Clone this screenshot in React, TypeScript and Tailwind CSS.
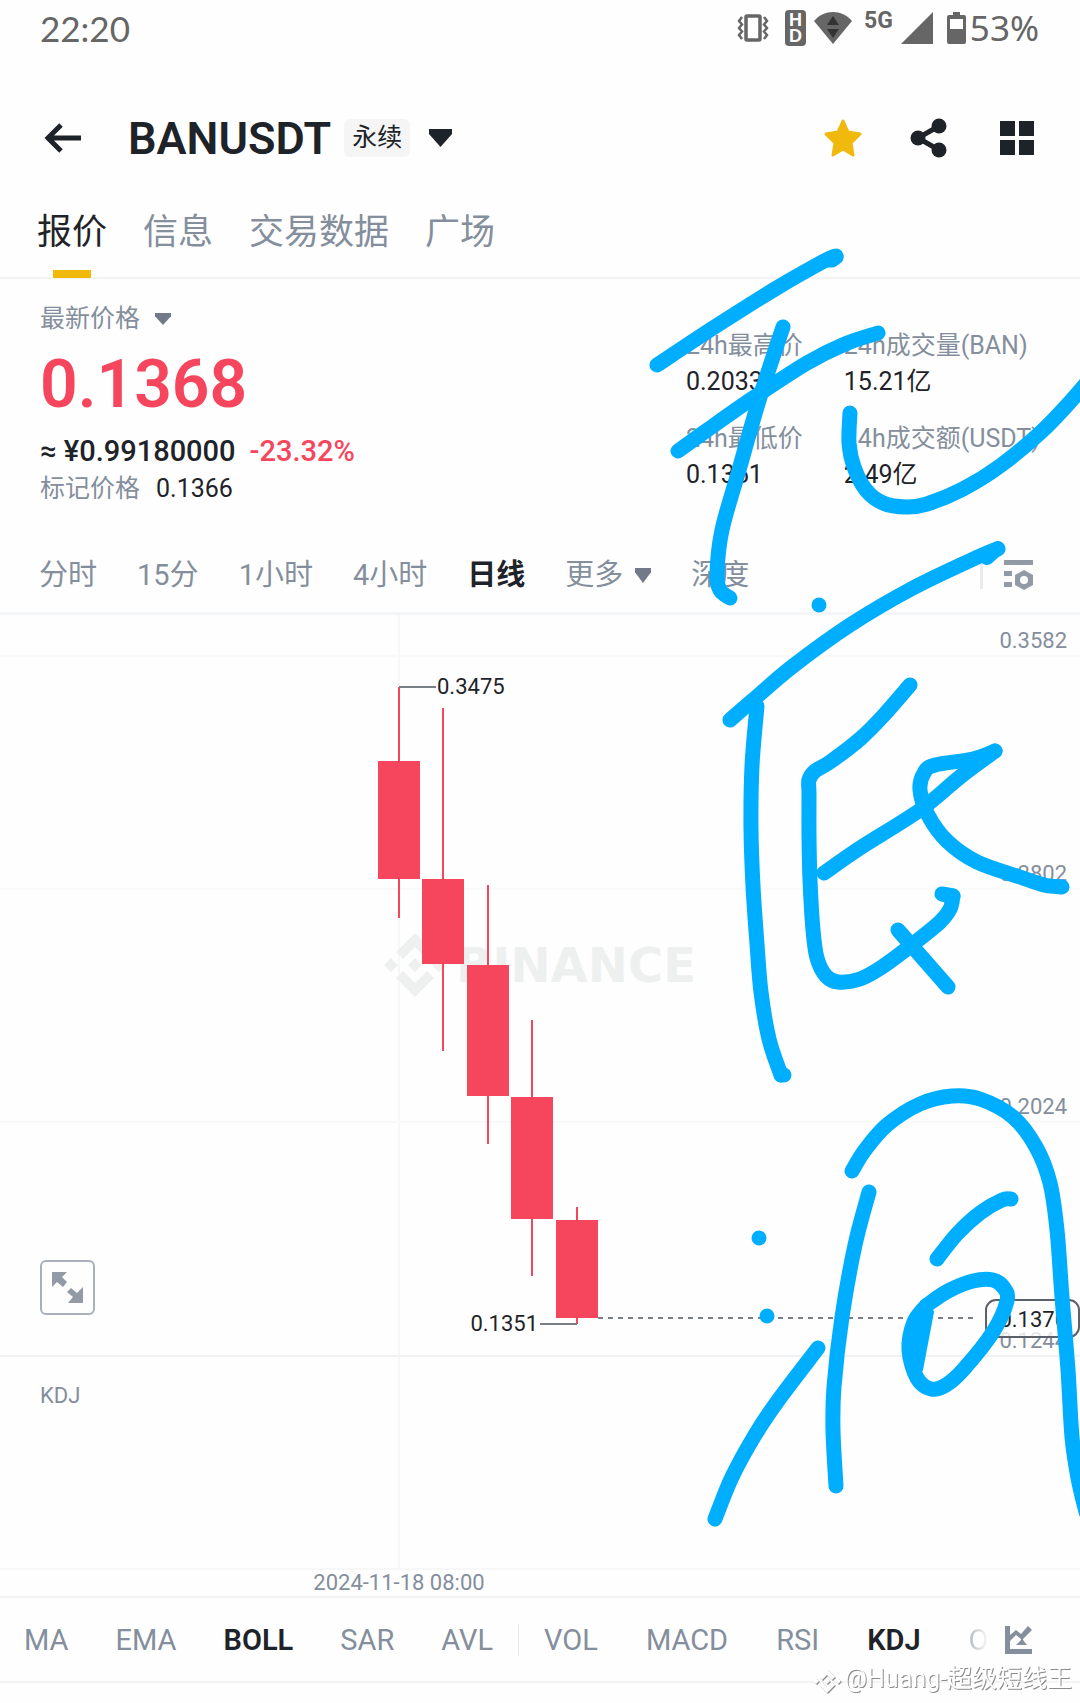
import { useState } from "react";

type Point = [number, number];

const pageTabs = ["报价", "信息", "交易数据", "广场"];
const intervals = ["分时", "15分", "1小时", "4小时", "日线"];
const mainIndicators = ["MA", "EMA", "BOLL", "SAR", "AVL"];
const subIndicators = ["VOL", "MACD", "RSI", "KDJ"];

const stats = [
    { label: "24h最高价", value: "0.2033" },
    { label: "24h成交量(BAN)", value: "15.21亿" },
    { label: "24h最低价", value: "0.1351" },
    { label: "24h成交额(USDT)", value: "2.49亿" },
];

const candles = [
    { x: 399, high: 687, open: 761, close: 879, low: 918 },
    { x: 443, high: 708, open: 879, close: 964, low: 1051 },
    { x: 488, high: 885, open: 965, close: 1096, low: 1144 },
    { x: 532, high: 1020, open: 1097, close: 1219, low: 1276 },
    { x: 577, high: 1207, open: 1220, close: 1318, low: 1324 },
];

const gridLines = [
    { y: 656, label: "0.3582" },
    { y: 889, label: "0.2802" },
    { y: 1122, label: "0.2024" },
    { y: 1356, label: "0.1244" },
];

// Pen annotations, one list of points per stroke
const strokes: Point[][] = [
    [[657, 365], [713, 328], [775, 289], [826, 260], [836, 256]],
    [[678, 451], [713, 426], [753, 398], [807, 363], [845, 344], [878, 333]],
    [[783, 327], [760, 397], [739, 470], [722, 530], [717, 573], [720, 590], [730, 598]],
    [[850, 413], [849, 443], [854, 467], [866, 490], [883, 503], [906, 507], [927, 504], [963, 489], [1000, 466], [1040, 433], [1070, 402], [1094, 374]],
    [[730, 720], [753, 700], [793, 666], [850, 625], [913, 588], [980, 556], [998, 549]],
    [[757, 706], [752, 766], [751, 828], [753, 886], [757, 944], [761, 992], [769, 1039], [781, 1075]],
    [[781, 1075], [784, 1075]],
    [[910, 685], [884, 715], [860, 739], [830, 762], [815, 771], [809, 780], [809, 794], [809, 835], [810, 880], [813, 930], [817, 958], [826, 976], [838, 982], [860, 979], [882, 967], [913, 944], [940, 922], [950, 909], [953, 896]],
    [[953, 896], [942, 894]],
    [[898, 930], [948, 987]],
    [[824, 873], [860, 848], [920, 810], [960, 777], [995, 751]],
    [[995, 751], [973, 759], [935, 765], [924, 773], [920, 790], [928, 815], [947, 841], [977, 862], [1020, 877], [1044, 885], [1062, 887]],
    [[852, 1171], [865, 1150], [887, 1125], [920, 1104], [952, 1096], [980, 1099], [1013, 1117], [1036, 1147], [1050, 1183], [1057, 1230], [1062, 1297], [1068, 1370], [1072, 1437], [1078, 1478], [1086, 1512]],
    [[869, 1192], [855, 1245], [842, 1317], [834, 1387], [833, 1430], [836, 1486]],
    [[818, 1348], [777, 1402], [755, 1435], [732, 1477], [715, 1519]],
    [[937, 1259], [957, 1234], [980, 1213], [1002, 1200], [1011, 1199]],
    [[927, 1305], [948, 1291], [973, 1281], [993, 1280], [1004, 1288], [1007, 1301], [993, 1332], [963, 1370], [946, 1385], [931, 1389], [917, 1378], [909, 1350], [914, 1322], [927, 1305]],
];

const dots: Point[] = [[819, 605], [759, 1238], [767, 1316]];

function smoothPath(points: Point[]) {
    let d = `M${points[0][0]} ${points[0][1]}`;
    for (let i = 0; i < points.length - 1; i++) {
        const p0 = points[i - 1] ?? points[i];
        const p1 = points[i];
        const p2 = points[i + 1];
        const p3 = points[i + 2] ?? p2;
        d += ` C${p1[0] + (p2[0] - p0[0]) / 6} ${p1[1] + (p2[1] - p0[1]) / 6}`;
        d += ` ${p2[0] - (p3[0] - p1[0]) / 6} ${p2[1] - (p3[1] - p1[1]) / 6}`;
        d += ` ${p2[0]} ${p2[1]}`;
    }
    return d;
}

function Caret({ className }: { className: string }) {
    return (
        <svg viewBox="0 0 22 18" className={className} fill="currentColor" preserveAspectRatio="none" aria-hidden="true">
            <path d="M0 0H22V5L11 18L0 5Z" />
        </svg>
    );
}

function StatusBar() {
    return (
        <div className="flex h-14 items-center justify-between pl-10 pr-[41px] text-[#666]">
            <span className="font-['Lato',sans-serif] text-[35px] leading-[56px]">22:20</span>
            <div className="flex items-center">
                <svg width="32" height="28" viewBox="0 0 32 28" fill="none" stroke="currentColor" aria-hidden="true">
                    <rect x="9" y="2" width="14" height="24" rx="1" strokeWidth="3.5" />
                    <path d="M5 3L2 7L5 10.500L2 14L5 17.500L2 21L5 25M27 3L30 7L27 10.500L30 14L27 17.500L30 21L27 25" strokeWidth="2.500" />
                </svg>
                <span className="ml-4 flex h-9 w-[21px] flex-col items-center justify-center rounded bg-[#666] font-['Liberation_Sans',sans-serif] text-[18px] font-bold leading-4 text-[#fefefe]">
                    <span>H</span>
                    <span>D</span>
                </span>
                <svg width="38" height="32" viewBox="0 0 38 32" className="ml-2" aria-hidden="true">
                    <path d="M0 9C10-3 28-3 38 9L19 32Z" fill="currentColor" />
                    <path d="M19 4L25 13H13ZM19 26L13 17H25Z" fill="#333" />
                </svg>
                <span className="ml-3 self-start pt-2 font-['Roboto',sans-serif] text-[23px] font-bold leading-[26px]">5G</span>
                <svg width="32" height="32" viewBox="0 0 32 32" className="ml-2" fill="currentColor" aria-hidden="true">
                    <path d="M32 0V32H0Z" />
                </svg>
                <svg width="19" height="32" viewBox="0 0 19 32" className="ml-[14px]" aria-hidden="true">
                    <path d="M6 0H13V3H17Q19 3 19 5V30Q19 32 17 32H2Q0 32 0 30V5Q0 3 2 3H6Z" fill="currentColor" />
                    <rect x="3" y="7" width="13" height="10" fill="#fefefe" />
                </svg>
                <span className="ml-1 font-['Noto_Sans',sans-serif] text-[35px] leading-[56px]">53%</span>
            </div>
        </div>
    );
}

function Header() {
    return (
        <header className="mt-[42px] flex h-20 items-center justify-between pl-11 pr-[46px]">
            <div className="flex items-center">
                <button type="button" aria-label="返回">
                    <svg width="37" height="30" viewBox="0 0 37 30" fill="none" stroke="currentColor" strokeWidth="5" aria-hidden="true">
                        <path d="M37 15H5M17 2L4 15L17 28" />
                    </svg>
                </button>
                <h1 className="ml-[47px] pt-[2px] text-[45px] font-semibold leading-[56px]">BANUSDT</h1>
                <span className="ml-[13px] rounded-md bg-[#f5f5f5] px-2 text-[25px] leading-[38px]">永续</span>
                <button type="button" aria-label="切换交易对" className="ml-[19px]">
                    <Caret className="h-[18px] w-[23px]" />
                </button>
            </div>
            <div className="flex items-center">
                <button type="button" aria-label="收藏">
                    <svg width="38" height="40" viewBox="0 0 38 40" aria-hidden="true">
                        <path d="M19 3L24 14L36 16L27 25L29 37L19 31L9 37L11 25L2 16L14 14Z" fill="#f0b90b" stroke="#f0b90b" strokeWidth="3" strokeLinejoin="round" />
                    </svg>
                </button>
                <button type="button" aria-label="分享" className="ml-12">
                    <svg width="37" height="40" viewBox="0 0 37 40" aria-hidden="true">
                        <path d="M29 8L8 20L29 32" fill="none" stroke="currentColor" strokeWidth="5" />
                        <circle cx="29" cy="8" r="7.500" fill="currentColor" />
                        <circle cx="8" cy="20" r="7.500" fill="currentColor" />
                        <circle cx="29" cy="32" r="7.500" fill="currentColor" />
                    </svg>
                </button>
                <button type="button" aria-label="更多功能" className="ml-[53px]">
                    <svg width="34" height="34" viewBox="0 0 34 34" fill="currentColor" aria-hidden="true">
                        <path d="M0 0H15V15H0ZM19 0H34V15H19ZM0 19H15V34H0ZM19 19H34V34H19Z" />
                    </svg>
                </button>
            </div>
        </header>
    );
}

function PriceChart() {
    return (
        <div className="relative">
            <svg viewBox="0 615 1080 981" className="block h-auto w-full" role="img" aria-label="BANUSDT 日线">
                <path d="M399 615V1569" stroke="#f7f7f8" strokeWidth="2" />
                {gridLines.map((line, i) => (
                    <path key={line.y} d={`M0 ${line.y}H1080`} stroke={i === 3 ? "#f1f2f3" : "#f9f9fa"} strokeWidth="2" />
                ))}
                <path d="M0 1569H1080" stroke="#f7f7f8" strokeWidth="2" />

                <g fill="#eef0f0">
                    <path d="M415 933L434 952L427 959L415 947L403 959L396 952ZM415 997L396 978L403 971L415 983L427 971L434 978ZM391 958L398 965L391 972L384 965ZM415 958L422 965L415 972L408 965ZM439 958L446 965L439 972L432 965Z" />
                    <text x="456" y="982" className="font-['DejaVu_Sans',sans-serif] text-[48px] font-bold">BINANCE</text>
                </g>

                {candles.map((candle) => (
                    <g key={candle.x} fill="#f6465d">
                        <rect x={candle.x - 1} y={candle.high} width="2" height={candle.low - candle.high} />
                        <rect x={candle.x - 21} y={candle.open} width="42" height={candle.close - candle.open} />
                    </g>
                ))}

                <g stroke="#7a7e86" strokeWidth="2">
                    <path d="M399 687H436M540 1324H577" />
                    <path d="M598 1318H974" strokeDasharray="5 5" />
                </g>

                <g fill="#1e2329" className="text-[22px]">
                    <text x="437" y="694">0.3475</text>
                    <text x="538" y="1331" textAnchor="end">0.1351</text>
                </g>
                <g fill="#848e9c" className="text-[22px]">
                    {gridLines.map((line) => (
                        <text key={line.y} x="1067" y={line.y - 8} textAnchor="end">{line.label}</text>
                    ))}
                    <text x="40" y="1403">KDJ</text>
                    <text x="399" y="1590" textAnchor="middle">2024-11-18 08:00</text>
                </g>
                <rect x="986" y="1300" width="93" height="37" rx="10" fill="#fefefe" fillOpacity="0.8" stroke="#5c6068" strokeWidth="2" />
                <text x="1067" y="1327" textAnchor="end" fill="#1e2329" className="text-[22px]">0.1370</text>
            </svg>
            <button
                type="button"
                aria-label="全屏"
                className="absolute left-10 top-[645px] flex h-[55px] w-[55px] items-center justify-center rounded-md border-2 border-[#a9b0ba] text-[#929aa5]"
            >
                <svg width="31" height="31" viewBox="0 0 31 31" fill="currentColor" aria-hidden="true">
                    <path d="M0 0H15L10 5L15 10L11 15L5 10L0 15ZM31 31H16L21 25L15 20L19 16L25 21L31 15Z" />
                </svg>
            </button>
        </div>
    );
}

function Annotations() {
    return (
        <svg viewBox="0 0 1080 1703" className="pointer-events-none absolute left-0 top-0 h-auto w-full" aria-hidden="true">
            <g fill="none" stroke="#00aeff" strokeWidth="15" strokeLinecap="round" strokeLinejoin="round">
                {strokes.map((points, i) => (
                    <path key={i} d={smoothPath(points)} />
                ))}
            </g>
            <g fill="#00aeff" stroke="#00aeff" strokeLinejoin="round">
                <path d="M922 1302L932 1312L921 1370L912 1368L908 1340Z" strokeWidth="4" />
                <path d="M985 555L998 548L987 558Z" strokeWidth="14" />
                <path d="M828 260L836 257L832 260Z" strokeWidth="15" />
            </g>
            {dots.map(([x, y]) => (
                <circle key={y} cx={x} cy={y} r="7.500" fill="#00aeff" />
            ))}
        </svg>
    );
}

export default function App() {
    const [pageTab, setPageTab] = useState("报价");
    const [interval, setInterval] = useState("日线");
    const [mainIndicator, setMainIndicator] = useState("BOLL");
    const [subIndicator, setSubIndicator] = useState("KDJ");

    return (
        <div className="relative min-h-screen overflow-hidden bg-[#fefefe] font-['Roboto','Noto_Sans_CJK_SC',sans-serif] text-[#1e2329]">
            <StatusBar />
            <Header />

            <nav className="flex h-[101px] items-end gap-9 border-b-2 border-[#f3f3f4] pl-[37px]">
                {pageTabs.map((tab) => (
                    <button
                        key={tab}
                        type="button"
                        onClick={() => setPageTab(tab)}
                        className={`relative pb-5 text-[35px] leading-[48px] ${pageTab === tab ? "text-[#1e2329]" : "text-[#848e9c]"}`}
                    >
                        {tab}
                        {pageTab === tab && (
                            <span className="absolute -bottom-px left-4 h-2 w-[38px] bg-[#f0b90b]" />
                        )}
                    </button>
                ))}
            </nav>

            <section className="flex justify-between px-10 pt-[22px]">
                <div>
                    <button type="button" className="flex items-center text-[25px] leading-9 text-[#848e9c]">
                        最新价格
                        <Caret className="ml-[15px] h-3 w-4 text-[#707a8a]" />
                    </button>
                    <p className="mt-2 text-[66px] font-semibold leading-[80px] text-[#f6465d]">0.1368</p>
                    <p className="mt-[6px] flex gap-[14px] text-[29px] font-medium leading-10">
                        <span>≈ ¥0.99180000</span>
                        <span className="text-[#f6465d]">-23.32%</span>
                    </p>
                    <p className="flex gap-4 text-[25px] leading-9">
                        <span className="text-[#848e9c]">标记价格</span>
                        <span>0.1366</span>
                    </p>
                </div>
                <dl className="mt-[27px] grid grid-cols-[max-content_max-content] content-start gap-x-[41px] gap-y-[21px] text-[25px] leading-9">
                    {stats.map((stat) => (
                        <div key={stat.label}>
                            <dt className="text-[#848e9c]">{stat.label}</dt>
                            <dd>{stat.value}</dd>
                        </div>
                    ))}
                </dl>
            </section>

            <div className="mt-[31px] flex h-[77px] items-center border-b-[3px] border-[#f3f5f7] pl-[39px] pr-[46px] text-[29px] leading-10 text-[#848e9c]">
                <div className="flex gap-10">
                    {intervals.map((item) => (
                        <button
                            key={item}
                            type="button"
                            onClick={() => setInterval(item)}
                            className={interval === item ? "font-bold text-[#1e2329]" : ""}
                        >
                            {item}
                        </button>
                    ))}
                    <button type="button" className="flex items-center">
                        更多
                        <Caret className="ml-3 h-[15px] w-4 text-[#707a8a]" />
                    </button>
                    <button type="button">深度</button>
                </div>
                <span className="ml-auto h-7 w-[3px] bg-[#e9ebee]" />
                <button type="button" aria-label="图表设置" className="ml-[21px] text-[#929aa5]">
                    <svg width="30" height="30" viewBox="0 0 30 30" fill="currentColor" aria-hidden="true">
                        <path d="M0 0H29V5H0ZM0 11H8V16H0ZM0 22H8V27H0Z" />
                        <path fillRule="evenodd" d="M20 10L29 15V25L20 30L11 25V15ZM20 16A4 4 0 1 0 20 24A4 4 0 1 0 20 16Z" />
                    </svg>
                </button>
            </div>

            <PriceChart />

            <div className="flex h-[87px] items-center border-y-2 border-[#f3f3f4] pl-6 pr-12 text-[29px] leading-10 text-[#848e9c]">
                <div className="flex gap-[47px]">
                    {mainIndicators.map((name) => (
                        <button
                            key={name}
                            type="button"
                            onClick={() => setMainIndicator(name)}
                            className={mainIndicator === name ? "font-semibold text-[#1e2329]" : ""}
                        >
                            {name}
                        </button>
                    ))}
                </div>
                <span className="mx-[25px] h-8 w-px bg-[#e6e8eb]" />
                <div className="flex gap-12">
                    {subIndicators.map((name) => (
                        <button
                            key={name}
                            type="button"
                            onClick={() => setSubIndicator(name)}
                            className={subIndicator === name ? "font-semibold text-[#1e2329]" : ""}
                        >
                            {name}
                        </button>
                    ))}
                    <button type="button" className="bg-gradient-to-r from-[#b4bac3] to-[#fefefe] bg-clip-text text-transparent">O</button>
                </div>
                <button type="button" aria-label="指标设置" className="ml-auto">
                    <svg width="27" height="28" viewBox="0 0 27 28" fill="currentColor" aria-hidden="true">
                        <path d="M0 0H5V23H27V28H0ZM5 9L11 4L16 8L23 0L27 4L18 13V14L22 19H11L16 14V13L11 9L5 15Z" />
                    </svg>
                </button>
            </div>

            <div className="absolute bottom-0 right-2 flex items-center text-white drop-shadow-[1px_1px_0_#8c8c8c]">
                <svg width="28" height="24" viewBox="0 0 28 24" fill="currentColor" aria-hidden="true">
                    <path d="M14 0L22 8L19 11L14 6L9 11L6 8ZM14 24L6 16L9 13L14 18L19 13L22 16ZM3 9L6 12L3 15L0 12ZM25 9L28 12L25 15L22 12ZM14 9L17 12L14 15L11 12Z" />
                </svg>
                <span className="ml-1 pb-1 text-[25px] leading-10">@Huang-超级短线王</span>
            </div>

            <Annotations />
        </div>
    );
}
